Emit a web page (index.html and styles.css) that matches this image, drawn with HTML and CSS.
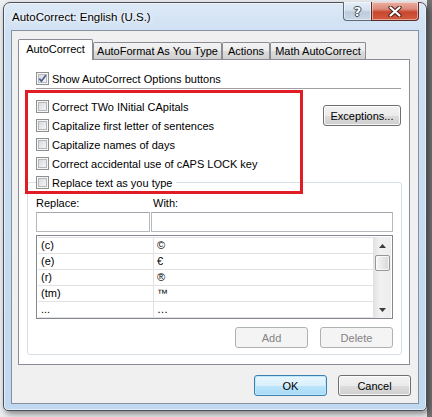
FILE: index.html
```html
<!DOCTYPE html>
<html lang="en">
<head>
<meta charset="utf-8">
<title>AutoCorrect: English (U.S.)</title>
<link rel="stylesheet" href="styles.css">
</head>
<body>
<div class="window">
  <div class="titlebar">
    <span class="title">AutoCorrect: English (U.S.)</span>
    <div class="caption-buttons">
      <span class="cap-btn cap-help">?</span>
      <span class="cap-btn cap-close">
        <svg width="14" height="11" viewBox="0 0 14 11">
          <path d="M2.5 1.5 L11.5 9.5 M11.5 1.5 L2.5 9.5" stroke="#4a2019" stroke-width="4.2" stroke-linecap="round"/>
          <path d="M2.5 1.5 L11.5 9.5 M11.5 1.5 L2.5 9.5" stroke="#ffffff" stroke-width="2.2" stroke-linecap="round"/>
        </svg>
      </span>
    </div>
  </div>

  <div class="client">
    <div class="tabs">
      <span class="tab tab-active tab-autocorrect">AutoCorrect</span>
      <span class="tab tab-format">AutoFormat As You Type</span>
      <span class="tab tab-actions">Actions</span>
      <span class="tab tab-math">Math AutoCorrect</span>
    </div>

    <div class="panel">
      <div class="check indent">
        <span class="cb cb-checked">
          <svg width="9" height="9" viewBox="0 0 9 9"><path d="M1.3 4.6 L3.4 7.2 L7.8 1.3" fill="none" stroke="#4b5f8f" stroke-width="1.7"/></svg>
        </span>
        <span>Show AutoCorrect Options buttons</span>
      </div>
      <hr class="sep">

      <div class="options">
        <div class="option-list">
          <div class="check"><span class="cb"></span><span>Correct TWo INitial CApitals</span></div>
          <div class="check"><span class="cb"></span><span>Capitalize first letter of sentences</span></div>
          <div class="check"><span class="cb"></span><span>Capitalize names of days</span></div>
          <div class="check"><span class="cb"></span><span>Correct accidental use of cAPS LOCK key</span></div>
        </div>
        <button class="btn btn-exceptions" type="button">Exceptions...</button>
      </div>

      <fieldset class="group">
        <legend class="check legend"><span class="cb"></span><span>Replace text as you type</span></legend>
        <div class="field-labels"><span>Replace:</span><span class="with-label">With:</span></div>
        <div class="fields"><span class="textbox"></span><span class="textbox"></span></div>
        <div class="list">
          <div class="list-rows">
            <div class="row"><span class="cell">(c)</span><span class="cell">©</span></div>
            <div class="row"><span class="cell">(e)</span><span class="cell">€</span></div>
            <div class="row"><span class="cell">(r)</span><span class="cell">®</span></div>
            <div class="row"><span class="cell">(tm)</span><span class="cell">™</span></div>
            <div class="row"><span class="cell">...</span><span class="cell">…</span></div>
          </div>
          <div class="scrollbar">
            <span class="sb-arrow">
              <svg width="7" height="4" viewBox="0 0 7 4"><path d="M0 4 L3.5 0 L7 4 Z" fill="#3c3c3c"/></svg>
            </span>
            <span class="sb-thumb"></span>
            <span class="sb-track"></span>
            <span class="sb-arrow">
              <svg width="7" height="4" viewBox="0 0 7 4"><path d="M0 0 L7 0 L3.5 4 Z" fill="#3c3c3c"/></svg>
            </span>
          </div>
        </div>
        <div class="group-buttons">
          <button class="btn" type="button" disabled>Add</button>
          <button class="btn" type="button" disabled>Delete</button>
        </div>
      </fieldset>

      <div class="highlight"></div>
    </div>

    <div class="dialog-buttons">
      <button class="btn btn-default" type="button">OK</button>
      <button class="btn" type="button">Cancel</button>
    </div>
  </div>
</div>
</body>
</html>
```

FILE: styles.css
```css
* {
  box-sizing: border-box;
}

html,
body {
  margin: 0;
}

body {
  width: 432px;
  height: 417px;
  overflow: hidden;
  padding: 2px 0 0 3px;
  font-family: "Liberation Sans", Arial, sans-serif;
  font-size: 11px;
  color: #000;
  background:
    linear-gradient(to right, transparent 427px, #727272 427px),
    #eceef1;
}

/* Aero glass frame */
.window {
  width: 424px;
  height: 409px;
  display: flex;
  flex-direction: column;
  padding: 0 7px 6px;
  border: 1px solid #4a5058;
  border-radius: 7px 7px 5px 5px;
  background: linear-gradient(#dde9f6 0, #cfe0f3 30px, #c0d8f0 100%);
  box-shadow: inset 0 0 0 1px rgba(255, 255, 255, 0.55), 2px 3px 6px rgba(0, 0, 0, 0.45);
}

.titlebar {
  height: 27px;
  display: flex;
  align-items: center;
  padding-left: 1px;
}

.title {
  font-size: 11.5px;
  text-shadow: 0 0 6px rgba(255, 255, 255, 0.95), 0 0 3px rgba(255, 255, 255, 0.9);
}

.caption-buttons {
  margin-left: auto;
  align-self: flex-start;
  margin-top: -1px;
  display: flex;
  height: 19px;
}

.cap-btn {
  display: flex;
  align-items: center;
  justify-content: center;
  height: 19px;
  border: 1px solid #5d6b7c;
  border-top: 0;
  box-shadow: inset 0 0 0 1px rgba(255, 255, 255, 0.45);
}

.cap-help {
  width: 28px;
  border-right: 0;
  border-radius: 0 0 0 4px;
  background: linear-gradient(#e6eef7 0, #d5e1ee 45%, #bccbdc 55%, #c9d7e6 100%);
  color: #fff;
  font-family: "DejaVu Sans", sans-serif;
  font-weight: bold;
  font-size: 13px;
  text-shadow: 1px 0 0 #3a4656, -1px 0 0 #3a4656, 0 1px 0 #3a4656, 0 -1px 0 #3a4656;
}

.cap-close {
  width: 48px;
  border-color: #5a2c26;
  border-radius: 0 0 4px 0;
  background: linear-gradient(#eab0a4 0, #dc8a79 40%, #c9462f 55%, #d35a3f 100%);
}

/* Dialog client area */
.client {
  flex: 1;
  border: 1px solid #8491a1;
  background: #f0f0f0;
  padding: 8px 8px 0 6px;
}

.tabs {
  display: flex;
  align-items: flex-end;
  height: 20px;
  position: relative;
  z-index: 1;
}

.tab {
  height: 17px;
  line-height: 16px;
  text-align: center;
  white-space: nowrap;
  border: 1px solid #898c95;
  border-bottom: 0;
  border-radius: 2px 2px 0 0;
  background: linear-gradient(#f3f3f3 0, #ebebeb 50%, #dddddd 50%, #d0d0d0 100%);
}

.tab-active {
  height: 21px;
  line-height: 18px;
  margin-bottom: -1px;
  background: #fff;
}

.tab-autocorrect { width: 75px; }
.tab-format { width: 129px; }
.tab-actions { width: 48px; }
.tab-math { width: 96px; }

.panel {
  position: relative;
  height: 306px;
  border: 1px solid #898c95;
  background: #fff;
  padding: 9px 7px 0 8px;
}

/* Checkboxes */
.check {
  display: flex;
  align-items: center;
  gap: 3px;
  height: 19px;
  white-space: nowrap;
}

.indent {
  margin-left: 9px;
}

.cb {
  flex: none;
  width: 13px;
  height: 13px;
  display: flex;
  align-items: center;
  justify-content: center;
  border: 1px solid #8e8f8f;
  background: #f4f4f4;
  box-shadow: inset 0 0 0 1px #f6f6f6, inset 0 0 0 2px #b4b8bd;
  background-image: linear-gradient(135deg, #d0d3d8 0, #e9eaec 55%, #fbfbfb 100%);
}

.cb-checked {
  box-shadow: inset 0 0 0 1px #f6f6f6, inset 0 0 0 2px #b9bcc2;
}

.sep {
  border: 0;
  border-top: 1px solid #a0a0a0;
  height: 0;
  margin: 0 1px 0 9px;
}

.options {
  display: flex;
  align-items: flex-start;
  margin-top: 8px;
}

.option-list {
  margin-left: 9px;
}

/* Push buttons */
.btn {
  width: 73px;
  height: 21px;
  padding: 0;
  font: inherit;
  color: #000;
  border: 1px solid #707070;
  border-radius: 3px;
  background: linear-gradient(#f2f2f2 0, #ebebeb 50%, #dddddd 50%, #cfcfcf 100%);
  box-shadow: inset 0 0 0 1px rgba(255, 255, 255, 0.8);
}

.btn:disabled {
  color: #838383;
  border-color: #adb2b5;
  background: #f4f4f4;
  box-shadow: none;
}

.btn-exceptions {
  width: 78px;
  margin: 8px 1px 0 auto;
}

.btn-default {
  border-color: #3c7fb1;
  background: linear-gradient(#eaf6fd 0, #d9f0fc 50%, #bee6fd 50%, #a7d9f5 100%);
  box-shadow: inset 0 0 0 1px #bfe8fb;
}

/* Replace-as-you-type group */
.group {
  margin: 0;
  min-width: 0;
  border: 1px solid #d5dfe5;
  border-radius: 3px;
  padding: 4px 8px 6px;
}

.legend {
  padding: 0 4px 0 0;
}

.field-labels {
  display: grid;
  grid-template-columns: 115px 1fr;
  height: 16px;
  line-height: 15px;
}

.with-label {
  padding-left: 2px;
}

.fields {
  display: grid;
  grid-template-columns: 114px 1fr;
  gap: 1px;
  height: 20px;
}

.textbox {
  border: 1px solid #b5b8bd;
  border-top-color: #a3a6ac;
  background: #fff;
}

.list {
  display: flex;
  height: 84px;
  margin-top: 3px;
  border: 1px solid #828790;
  padding: 1px 1px 0;
  background: #fff;
}

.list-rows {
  flex: 1;
  border-top: 1px solid #e2e2e2;
  border-right: 1px solid #e2e2e2;
}

.row {
  display: grid;
  grid-template-columns: 116px 1fr;
  height: 16px;
  border-bottom: 1px solid #e2e2e2;
}

.cell {
  line-height: 15px;
  padding-left: 3px;
}

.cell:first-child {
  border-right: 1px solid #e2e2e2;
}

.scrollbar {
  width: 17px;
  height: 81px;
  display: flex;
  flex-direction: column;
  background: linear-gradient(to right, #e3e3e3 0, #f1f1f1 35%, #ededed 100%);
}

.sb-arrow {
  height: 17px;
  display: flex;
  align-items: center;
  justify-content: center;
}

.sb-thumb {
  height: 16px;
  margin: 1px 1px 0;
  border: 1px solid #979797;
  border-radius: 2px;
  background: linear-gradient(to right, #f6f6f6 0, #e8e8e8 50%, #d9d9d9 100%);
  box-shadow: inset 0 0 0 1px rgba(255, 255, 255, 0.7);
}

.sb-track {
  flex: 1;
}

.group-buttons {
  display: flex;
  justify-content: flex-end;
  gap: 12px;
  margin: 8px 0 0;
}

.dialog-buttons {
  display: flex;
  justify-content: flex-end;
  gap: 11px;
  margin: 10px -1px 0 0;
}

/* Red annotation frame drawn over the option list */
.highlight {
  position: absolute;
  left: 6px;
  top: 30px;
  width: 278px;
  height: 104px;
  border: 3px solid #e21c24;
  pointer-events: none;
}
```
